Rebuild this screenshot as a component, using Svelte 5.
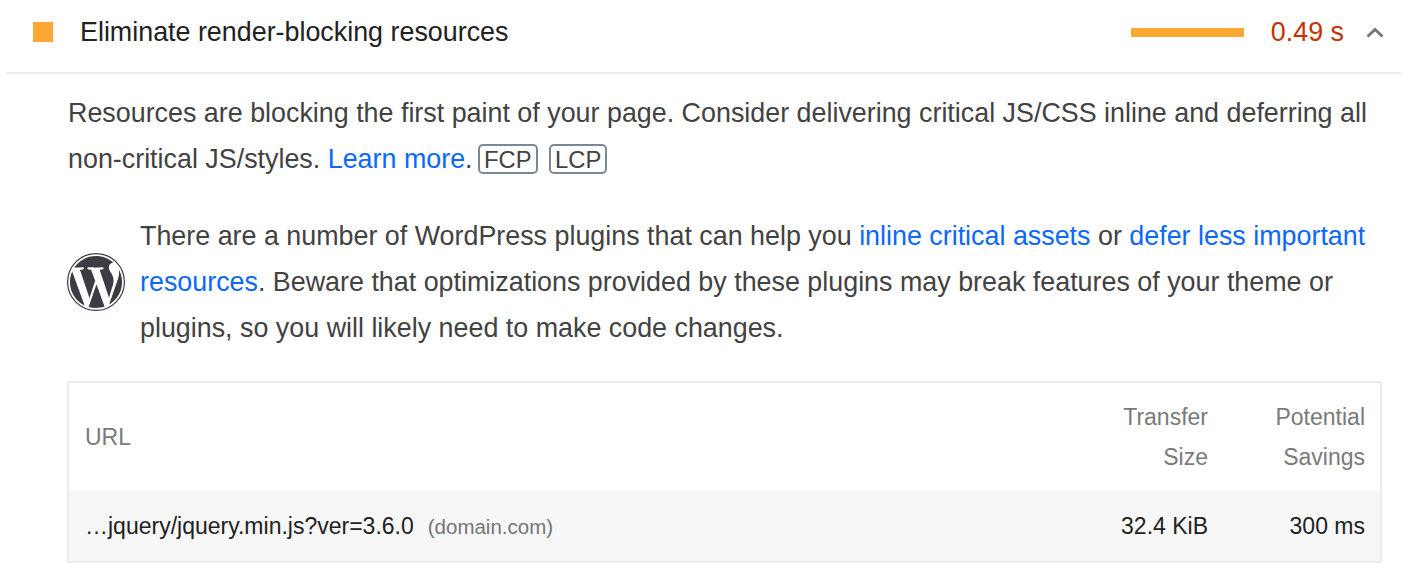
<script>
  // shapes around the W, drawn dark so the W itself stays white
  const logo = "M21.469 6.825c.84 1.537 1.318 3.3 1.318 5.175 0 3.979-2.156 7.456-5.363 9.325l3.295-9.527c.615-1.54.82-2.771.82-3.864 0-.405-.026-.78-.07-1.11m-7.981.105c.647-.03 1.232-.105 1.232-.105.582-.075.514-.93-.067-.899 0 0-1.755.135-2.88.135-1.064 0-2.85-.15-2.85-.15-.585-.03-.661.855-.075.885 0 0 .54.061 1.125.09l1.68 4.605-2.37 7.08L5.354 6.9c.649-.03 1.234-.1 1.234-.1.585-.075.516-.93-.065-.896 0 0-1.746.138-2.874.138-.2 0-.438-.008-.69-.015C4.911 3.15 8.235 1.215 12 1.215c2.809 0 5.365 1.072 7.286 2.833-.046-.003-.091-.009-.141-.009-1.06 0-1.812.923-1.812 1.914 0 .89.513 1.643 1.06 2.531.411.72.89 1.643.89 2.977 0 .915-.354 1.994-.821 3.479l-1.075 3.585-3.9-11.61.001.014zM12 22.784c-1.059 0-2.081-.153-3.048-.437l3.237-9.406 3.315 9.087c.024.053.05.101.078.149-1.12.393-2.325.609-3.582.609M1.211 12c0-1.564.336-3.05.935-4.39L7.29 21.709C3.694 19.96 1.212 16.271 1.211 12";
</script>

<div class="audit">
  <div class="head">
    <span class="square"></span>
    <span class="title">Eliminate render-blocking resources</span>
    <span class="bar"></span>
    <span class="value">0.49 s</span>
    <svg class="chevron" viewBox="0 0 18 11" width="18" height="11" aria-hidden="true">
      <path d="M1.5 9.5 9 2.5l7.5 7" fill="none" stroke="#757575" stroke-width="2.8" />
    </svg>
  </div>

  <div class="body">
    <p class="desc">
      Resources are blocking the first paint of your page. Consider delivering critical JS/CSS inline and deferring all non-critical JS/styles. <a href="#a">Learn more</a>. <span class="tag">FCP</span> <span class="tag second">LCP</span>
    </p>

    <div class="stack">
      <svg class="logo" viewBox="0 0 24 24" width="58" height="58" aria-hidden="true">
        <circle cx="12" cy="12" r="11.75" fill="none" stroke="#3a3e44" stroke-width="0.5" />
        <path d={logo} fill="#3a3e44" />
      </svg>
      <p>
        There are a number of WordPress plugins that can help you <a href="#b">inline critical assets</a> or <a href="#c">defer less important resources</a>. Beware that optimizations provided by these plugins may break features of your theme or plugins, so you will likely need to make code changes.
      </p>
    </div>

    <table>
      <thead>
        <tr>
          <th class="url">URL</th>
          <th class="num size">Transfer Size</th>
          <th class="num savings">Potential Savings</th>
        </tr>
      </thead>
      <tbody>
        <tr>
          <td class="url">…jquery/jquery.min.js?ver=3.6.0<span class="domain">(domain.com)</span></td>
          <td class="num">32.4 KiB</td>
          <td class="num">300 ms</td>
        </tr>
      </tbody>
    </table>
  </div>
</div>

<style>
  :global(body) {
    margin: 0;
    background: #fff;
    font-family: "Liberation Sans", Arial, sans-serif;
  }

  .audit {
    margin: 0 10px 0 6px;
    color: #424242;
    font-size: 26.87px;
  }

  /* header row */
  .head {
    display: flex;
    align-items: center;
    height: 64px;
    padding: 0 17px 8px 27px;
    border-bottom: 2px solid #ebebeb;
  }

  .square {
    width: 20px;
    height: 20px;
    background: #ffa733;
  }

  .title {
    flex: 1;
    margin-left: 27px;
    color: #212121;
  }

  .bar {
    width: 113px;
    height: 9px;
    background: #ffa733;
  }

  .value {
    margin-left: 27px;
    color: #c33300;
  }

  .chevron {
    margin-left: 22px;
  }

  .body {
    padding: 16px 19px 0 62px;
  }

  p {
    margin: 0;
    line-height: 46px;
  }

  a {
    color: #0b68fb;
    text-decoration: none;
  }

  .tag {
    display: inline-block;
    margin-left: -2px;
    padding: 1px 4px 0;
    border: 2px solid #7a8998;
    border-radius: 5px;
    font-size: 23.8px;
    line-height: 25px;
  }

  .second {
    margin-left: 4px;
  }

  .desc {
    margin-bottom: 31px;
  }

  .stack {
    display: flex;
    align-items: center;
    gap: 15px;
    margin-bottom: 30px;
  }

  .logo {
    flex: none;
    margin-left: -1px;
  }

  table {
    width: calc(100% + 1px);
    margin-left: -1px;
    border: 2px solid #ebebeb;
    border-spacing: 0;
    font-size: 23px;
  }

  th {
    height: 108px;
    padding: 0 16px;
    color: #7a7a7a;
    font-weight: 400;
    line-height: 40px;
    text-align: left;
  }

  td {
    height: 70px;
    padding: 0 16px;
    background: #f7f7f8;
    color: #212121;
  }

  .num {
    padding-right: 15px;
    text-align: right;
  }

  .size {
    width: 90px;
  }

  .savings {
    width: 126px;
  }

  .domain {
    margin-left: 14px;
    color: #757575;
    font-size: 20.5px;
  }
</style>
